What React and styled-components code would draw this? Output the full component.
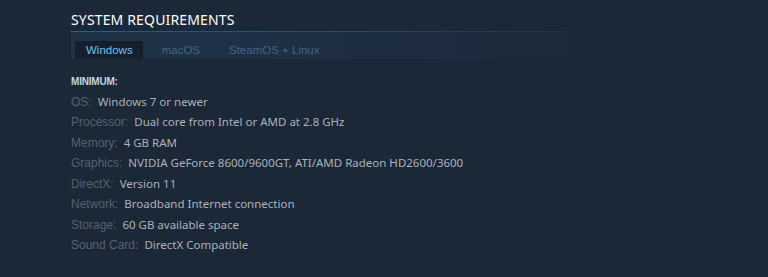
import React, { useState } from 'react'
import styled, { createGlobalStyle } from 'styled-components'

const GlobalStyle = createGlobalStyle`
  html, body {
    margin: 0;
    padding: 0;
    background: #1b2838;
  }
  body {
    font-family: "Noto Sans", Arial, sans-serif;
  }
`

const Page = styled.div`
  width: 768px;
  height: 277px;
  background: #1b2838;
  padding: 12px 0 0 71px;
  box-sizing: border-box;
`

const Section = styled.div`
  width: 620px;
`

const Title = styled.h2`
  margin: 0 0 3px;
  font-size: 14px;
  font-weight: 400;
  letter-spacing: 0.15px;
  line-height: 16px;
  color: #ffffff;
  text-transform: uppercase;
`

const TabBar = styled.div`
  display: flex;
  align-items: flex-end;
  height: 27px;
  padding-left: 4px;
  border-top: 1px solid transparent;
  border-image: linear-gradient(90deg, #2f5f80 0%, #2a4a63 45%, rgba(27, 40, 56, 0) 88%) 1;
  background: linear-gradient(90deg, #1f3346 0%, #1e2e41 50%, rgba(27, 40, 56, 0) 88%);
`

const Tab = styled.div`
  height: 18px;
  padding: 0 10px 0 11px;
  margin-right: 8px;
  display: flex;
  align-items: center;
  font-size: 11.5px;
  font-family: Arial, "Liberation Sans", sans-serif;
  color: ${p => (p.$active ? '#66c0f4' : '#3f6684')};
  background: ${p => (p.$active ? '#16202d' : 'transparent')};
  cursor: pointer;
`

const Body = styled.div`
  padding-top: 16px;
`

const Heading = styled.div`
  font-size: 10px;
  font-weight: 700;
  font-family: Arial, "Liberation Sans", sans-serif;
  color: #c6d4df;
  text-transform: uppercase;
  letter-spacing: -0.2px;
  line-height: 14px;
  margin-bottom: 3px;
`

const List = styled.ul`
  list-style: none;
  margin: 0;
  padding: 0;
`

const Item = styled.li`
  font-size: 11.5px;
  line-height: 20.43px;
  color: #acb2b8;
  white-space: nowrap;
`

const Label = styled.span`
  color: #56616d;
  margin-right: 6px;
  font-family: Arial, "Liberation Sans", sans-serif;
  font-size: 12px;
`

const tabs = ['Windows', 'macOS', 'SteamOS + Linux']

const reqs = [
  ['OS:', 'Windows 7 or newer'],
  ['Processor:', 'Dual core from Intel or AMD at 2.8 GHz'],
  ['Memory:', '4 GB RAM'],
  ['Graphics:', 'NVIDIA GeForce 8600/9600GT, ATI/AMD Radeon HD2600/3600'],
  ['DirectX:', 'Version 11'],
  ['Network:', 'Broadband Internet connection'],
  ['Storage:', '60 GB available space'],
  ['Sound Card:', 'DirectX Compatible'],
]

const App = () => {
  const [active, setActive] = useState(0)
  return (
    <Page>
      <GlobalStyle />
      <Section>
        <Title>System Requirements</Title>
        <TabBar>
          {tabs.map((t, i) => (
            <Tab key={t} $active={i === active} onClick={() => setActive(i)}>{t}</Tab>
          ))}
        </TabBar>
        <Body>
          <Heading>Minimum:</Heading>
          <List>
            {reqs.map(([label, value]) => (
              <Item key={label}>
                <Label>{label}</Label>{value}
              </Item>
            ))}
          </List>
        </Body>
      </Section>
    </Page>
  )
}

export default App
